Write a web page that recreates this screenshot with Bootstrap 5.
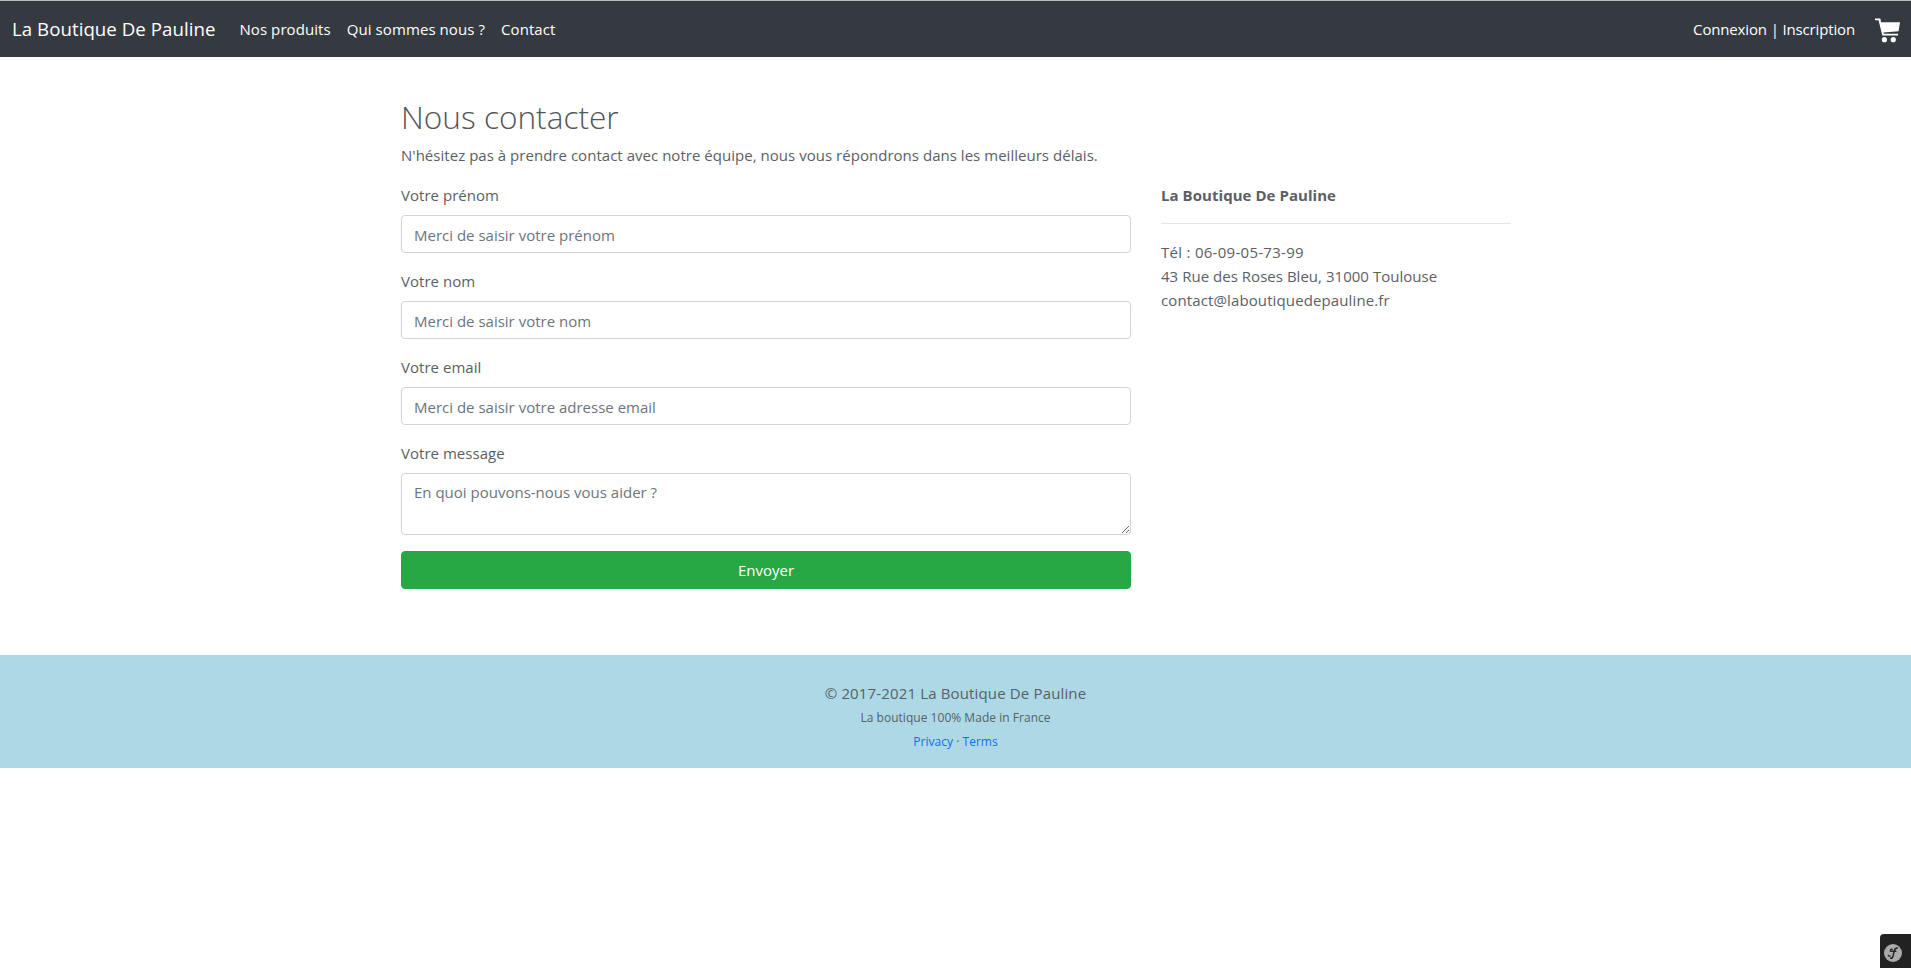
<!DOCTYPE html>
<html lang="fr">
<head>
<meta charset="utf-8">
<title>Nous contacter</title>
<link rel="stylesheet" href="https://cdn.jsdelivr.net/npm/bootstrap@5.3.0/dist/css/bootstrap.min.css">
<style>
body{font-family:"Open Sans","Noto Sans",sans-serif;color:#5a5f64;font-size:15px;line-height:24px;min-height:968px;letter-spacing:.03px;position:relative;overflow:hidden}
.topbar{background:#343a40;border-top:1px solid #bbb;height:57px;padding:0 11px 0 12px;font-size:15px}
.topbar a{color:#fff;text-decoration:none;white-space:nowrap}
.brandlink{font-size:18.7px;margin-right:24px}
.toplinks{gap:16px}
.toplinks a{letter-spacing:.08px}
.authlink{letter-spacing:-.15px}
.cartico{width:25px;height:25px;margin-left:20px;margin-top:3px}
.wrap{max-width:1140px;padding:0 14.5px 0 15.5px;margin:0 auto}
.pagetitle{font-size:31.6px;line-height:38px;font-weight:300;margin:41px 0 0;color:#555;letter-spacing:0}
.intro{margin:7px 0 16px}
.formcol{width:730px}
.sidecol{width:350px}
.cols{gap:30px}
.fieldlabel{display:block;margin:0 0 8px;line-height:24px}
.form-control{height:38px;font-size:15px;color:#495057;padding:7px 12px 5px;border-color:#ced4da;border-radius:4px;margin-bottom:16px}
.form-control::placeholder{color:#6c757d;opacity:1}
textarea.form-control{height:62px;margin-bottom:16px}
.sendbtn{background:#28a745;border-color:#28a745;height:38px;font-size:15px;border-radius:4px;padding:6px 12px}
.sidetitle{font-weight:700;margin:0;letter-spacing:.05px}
.siderule{margin:16px 0;border-top:1px solid #000;opacity:.1}
.phoneline{letter-spacing:.28px}
.mailline{letter-spacing:.12px}
.foot{background:#add8e6;height:113px;margin-top:66px;padding-top:25px;text-align:center}
.foot p{margin:0}
.foot .footmain{letter-spacing:.15px;line-height:26px}
.foot .smalltext{font-size:12px;line-height:24px}
.foot a{color:#0d6efd;text-decoration:none}
.sfbar{position:absolute;right:0;bottom:0;width:31px;height:34px;background:#222;border-top-left-radius:4px;display:flex;align-items:flex-start;justify-content:flex-start;padding:10px 0 0 4px}
</style>
</head>
<body>
<nav class="topbar d-flex align-items-center">
  <a class="brandlink" href="#">La Boutique De Pauline</a>
  <div class="d-flex toplinks">
    <a href="#">Nos produits</a>
    <a href="#">Qui sommes nous ?</a>
    <a href="#">Contact</a>
  </div>
  <div class="ms-auto d-flex align-items-center">
    <a class="authlink" href="#">Connexion | Inscription</a>
    <svg class="cartico" viewBox="0 0 26 25" fill="#fff" aria-hidden="true"><path d="M0 0h5.500l.9 3.800H26l-1.500 9.400L8.800 14.500l.3 1.300H24v2H7.600L3.700 1.800H0z"/><circle cx="9.800" cy="22" r="2.700"/><circle cx="19" cy="22" r="2.700"/></svg>
  </div>
</nav>
<main class="wrap">
  <h1 class="pagetitle">Nous contacter</h1>
  <p class="intro">N'hésitez pas à prendre contact avec notre équipe, nous vous répondrons dans les meilleurs délais.</p>
  <div class="d-flex cols">
    <form class="formcol">
      <label class="fieldlabel" for="a">Votre prénom</label>
      <input id="a" class="form-control" placeholder="Merci de saisir votre prénom">
      <label class="fieldlabel" for="b">Votre nom</label>
      <input id="b" class="form-control" placeholder="Merci de saisir votre nom">
      <label class="fieldlabel" for="c">Votre email</label>
      <input id="c" class="form-control" placeholder="Merci de saisir votre adresse email">
      <label class="fieldlabel" for="d">Votre message</label>
      <textarea id="d" class="form-control" placeholder="En quoi pouvons-nous vous aider ?"></textarea>
      <button type="button" class="btn btn-success w-100 sendbtn">Envoyer</button>
    </form>
    <aside class="sidecol">
      <p class="sidetitle">La Boutique De Pauline</p>
      <hr class="siderule">
      <div><span class="phoneline">Tél : 06-09-05-73-99</span><br>43 Rue des Roses Bleu, 31000 Toulouse<br><span class="mailline">contact@laboutiquedepauline.fr</span></div>
    </aside>
  </div>
</main>
<footer class="foot">
  <p class="footmain">© 2017-2021 La Boutique De Pauline</p>
  <p class="smalltext">La boutique 100% Made in France</p>
  <p class="smalltext"><a href="#">Privacy</a> · <a href="#">Terms</a></p>
</footer>
<div class="sfbar"><svg width="18" height="18" viewBox="0 0 24 24"><circle cx="12" cy="12" r="12" fill="#aaa"/><path d="M18.500 5.500c-2.600-.8-4.300 1.300-4.900 4l-1.700 7c-.5 2-1.700 3-3.900 2.300M9.500 9.500h7" fill="none" stroke="#222" stroke-width="2"/><path d="M5.500 14.500c.3 2 2.300 2.300 3.200 1M11.500 7.500c-2-1.500-4.500.5-2.300 3" fill="none" stroke="#222" stroke-width="1.700"/></svg></div>
</body>
</html>
